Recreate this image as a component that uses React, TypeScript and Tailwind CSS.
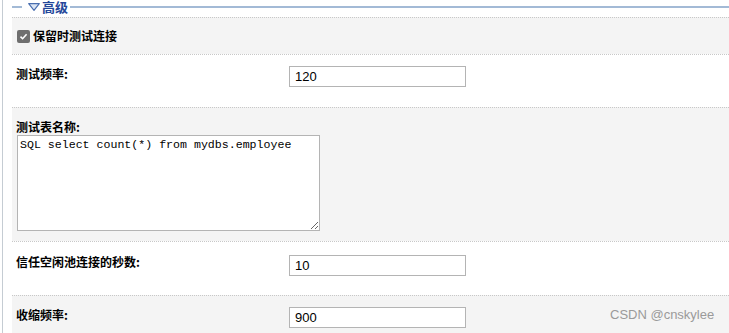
import * as React from 'react';

const Field = ({ value }: { value: string }) => (
  <div className="w-[177px] h-[21px] border border-[#b4b4b4] bg-white flex items-center pl-[5px] text-[13px] text-black font-['Liberation_Sans',sans-serif]">
    {value}
  </div>
);

const Label = ({ children }: { children: React.ReactNode }) => (
  <div className="w-[277px] shrink-0 pl-[4px] text-[12px] leading-[16px] font-bold text-black">
    {children}
  </div>
);

export default function App() {
  return (
    <div className="relative w-[729px] h-[333px] overflow-hidden bg-white font-['Noto_Sans_CJK_SC','Noto_Sans',sans-serif]">
      <div className="ml-[2px] h-full border-l border-[#c5ccd3]">
        {/* legend */}
        <div className="flex items-center h-[13px] mb-[4px]">
          <div className="ml-[9px] w-[10px] h-[2px] bg-[#a3bad6]" />
          <svg className="ml-[6px]" width="12" height="8" viewBox="0 0 12 8">
            <path d="M0.7 0.7 H11.3 L6 7.3 Z" fill="#dbe5f4" stroke="#4a6fb0" strokeWidth="1.2" strokeLinejoin="round" />
          </svg>
          <span className="ml-[2px] text-[13px] leading-[13px] font-bold text-[#24479a]">高级</span>
          <div className="ml-[2px] flex-1 h-[2px] bg-[#a3bad6]" />
        </div>

        <div className="ml-[9px]">
          {/* row 1 */}
          <div className="h-[37px] border-t border-dotted border-[#c8c8c8] bg-[#f4f4f4] flex items-center pl-[5px]">
            <span className="w-[13px] h-[13px] rounded-[2px] bg-[#6f6f6f] flex items-center justify-center">
              <svg width="9" height="9" viewBox="0 0 9 9">
                <path d="M1.5 4.6 L3.6 6.7 L7.6 2.2" fill="none" stroke="#fff" strokeWidth="1.6" />
              </svg>
            </span>
            <span className="ml-[3px] text-[12px] font-bold text-black">保留时测试连接</span>
          </div>

          {/* row 2 */}
          <div className="h-[53px] border-t border-dotted border-[#c8c8c8] bg-white flex items-start pt-[11px]">
            <Label>测试频率:</Label>
            <Field value="120" />
          </div>

          {/* row 3 */}
          <div className="h-[134px] border-t border-dotted border-[#c8c8c8] bg-[#f4f4f4] pt-[11px]">
            <Label>测试表名称:</Label>
            <textarea
              readOnly
              defaultValue="SQL select count(*) from mydbs.employee"
              className="block ml-[5px] w-[303px] h-[96px] border border-[#b4b4b4] bg-white px-[2px] py-[1px] text-[11.6px] leading-[15px] text-black font-['Liberation_Mono',monospace] outline-none"
            />
          </div>

          {/* row 4 */}
          <div className="h-[54px] border-t border-dotted border-[#c8c8c8] bg-white flex items-start pt-[12px]">
            <Label>信任空闲池连接的秒数:</Label>
            <div className="mt-[1px]">
              <Field value="10" />
            </div>
          </div>

          {/* row 5 */}
          <div className="h-[60px] border-t border-dotted border-[#c8c8c8] bg-[#f4f4f4] flex items-start pt-[11px]">
            <Label>收缩频率:</Label>
            <Field value="900" />
          </div>
        </div>
      </div>

      <div className="absolute left-[610px] top-[306px] text-[13px] leading-[18px] text-[#9a9a9a] font-['Liberation_Sans',sans-serif]">
        CSDN @cnskylee
      </div>
    </div>
  );
}
